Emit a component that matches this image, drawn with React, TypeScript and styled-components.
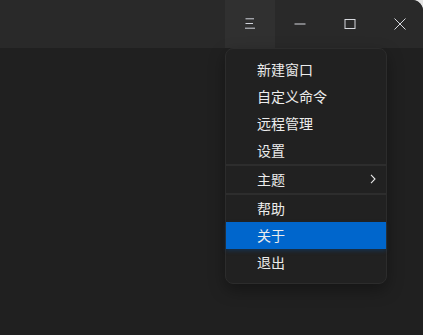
import styled, { createGlobalStyle } from 'styled-components';

const GlobalStyle = createGlobalStyle`
  html, body {
    margin: 0;
    padding: 0;
    overflow: hidden;
    background: #e4e4e4;
  }
  * {
    box-sizing: border-box;
  }
`;

const menuItems: { label: string; sub?: boolean; active?: boolean; sepBefore?: boolean }[] = [
  { label: '新建窗口' },
  { label: '自定义命令' },
  { label: '远程管理' },
  { label: '设置' },
  { label: '主题', sub: true, sepBefore: true },
  { label: '帮助', sepBefore: true },
  { label: '关于', active: true },
  { label: '退出' },
];

const App = () => {
  return (
    <>
      <GlobalStyle />
      <Window>
        <TitleBar>
          <Spacer />
          <CaptionButton $active>
            <svg width="12" height="12" viewBox="0 0 12 12">
              <path d="M1.5 0.8h8.5M1.5 5.5h7.5M1 10.2h10" stroke="#cfd2da" strokeWidth="1" fill="none" />
            </svg>
          </CaptionButton>
          <CaptionButton>
            <svg width="12" height="12" viewBox="0 0 12 12">
              <path d="M0.5 6h11" stroke="#d6d8de" strokeWidth="1" fill="none" />
            </svg>
          </CaptionButton>
          <CaptionButton>
            <svg width="12" height="12" viewBox="0 0 12 12">
              <rect x="1" y="1.5" width="10" height="9" stroke="#d6d8de" strokeWidth="1" fill="none" />
            </svg>
          </CaptionButton>
          <CloseButton>
            <svg width="12" height="12" viewBox="0 0 12 12">
              <path d="M0.5 0.5l11 11M11.5 0.5l-11 11" stroke="#d6d8de" strokeWidth="1" fill="none" />
            </svg>
          </CloseButton>
        </TitleBar>
        <Content />
        <Menu>
          {menuItems.map((item) => (
            <div key={item.label}>
              {item.sepBefore && <Separator />}
              <MenuItem $active={item.active}>
                <span>{item.label}</span>
                {item.sub && (
                  <svg width="6" height="10" viewBox="0 0 6 10">
                    <path d="M1 0.8l4 4.2l-4 4.2" stroke="#e6e6e6" strokeWidth="1.1" fill="none" />
                  </svg>
                )}
              </MenuItem>
            </div>
          ))}
        </Menu>
      </Window>
    </>
  );
};

export default App;

const Window = styled.div`
  position: relative;
  width: 423px;
  height: 335px;
  display: flex;
  flex-direction: column;
  background: #202020;
  border-top-right-radius: 11px;
  overflow: hidden;
  font-family: 'Noto Sans CJK SC', 'Noto Sans', sans-serif;
`;

const TitleBar = styled.div`
  display: flex;
  align-items: stretch;
  height: 48px;
  flex-shrink: 0;
  background: #292929;
`;

const Spacer = styled.div`
  flex: 1;
`;

const CaptionButton = styled.div<{ $active?: boolean }>`
  width: 50px;
  display: flex;
  align-items: center;
  justify-content: center;
  background: ${(p) => (p.$active ? '#303030' : 'transparent')};
`;

const CloseButton = styled(CaptionButton)`
  width: 48px;
  justify-content: flex-start;
  padding-left: 19px;
`;

const Content = styled.div`
  flex: 1;
  background: #202020;
`;

const Menu = styled.div`
  position: absolute;
  top: 48px;
  left: 225px;
  width: 162px;
  padding: 7px 0 7px;
  background: #212121;
  border: 1px solid #2c2c2c;
  border-radius: 8px;
  box-shadow: 0 6px 16px rgba(0, 0, 0, 0.35);
`;

const Separator = styled.div`
  height: 2px;
  background: #2d2d2d;
`;

const MenuItem = styled.div<{ $active?: boolean }>`
  display: flex;
  align-items: center;
  justify-content: space-between;
  height: 27px;
  padding: 0 10px 2px 31px;
  font-size: 14px;
  color: #ececec;
  background: ${(p) => (p.$active ? '#0066cc' : 'transparent')};
  box-shadow: ${(p) => (p.$active ? '0 2px 4px rgba(0, 80, 160, 0.35)' : 'none')};
`;
